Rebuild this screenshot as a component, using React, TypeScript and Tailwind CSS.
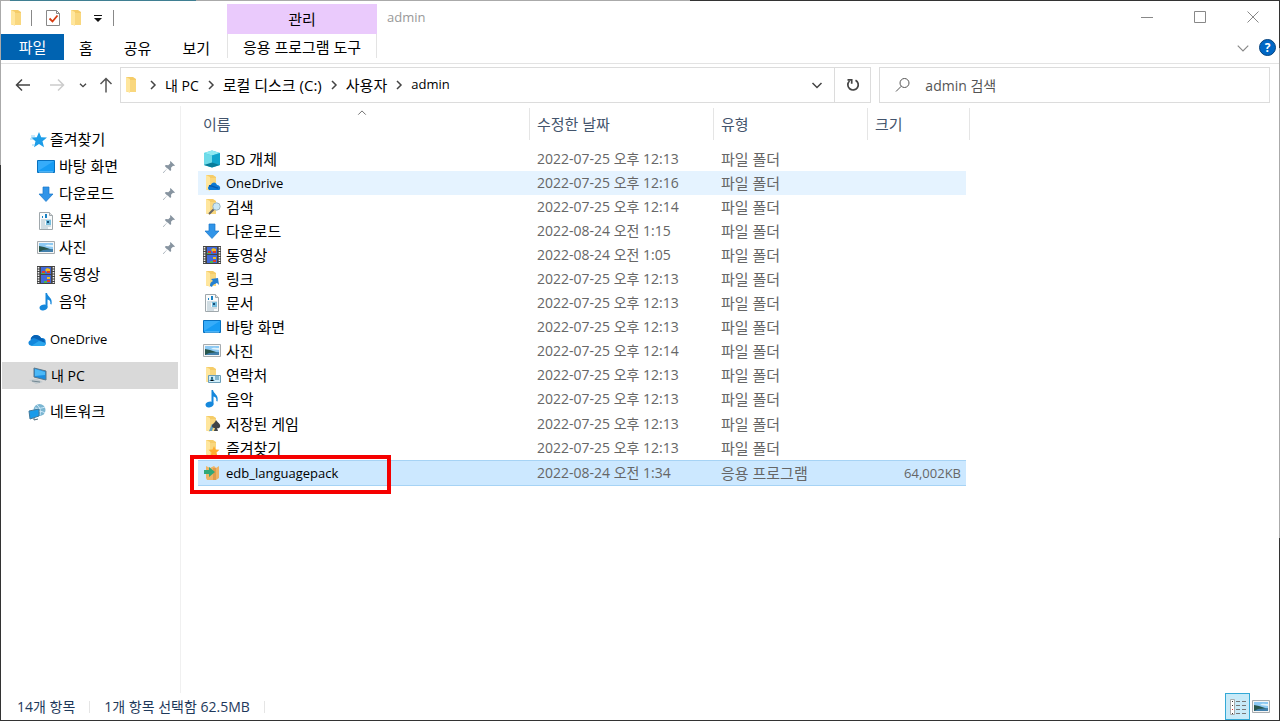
import React from "react";

const kinds = {
  cube: (
    <>
      <path d="M1 3 9 0.5 17 3v12l-8 2.5L1 15z" fill="#35c3dc" />
      <path d="M1 3 9 0.5 17 3 9 5.5z" fill="#8feaf2" />
      <path d="M1 3l8 2.500v8L1 15z" fill="#6fdbe9" />
      <path d="M9 5.5 17 3v12l-8-1.500z" fill="#11a5cc" />
      <path d="M1 15l8-2.500 8 2.500-8 2.5z" fill="#087c99" />
    </>
  ),
  folder: <Folder />,
  onedriveFolder: (
    <>
      <Folder />
      <path d="M6 16c-2-2-.5-4.500 1.500-4.500C9 7.500 13 7.500 14 11c3 .2 4 3 2.500 5z" fill="#0a78d4" />
      <path d="M6 11.800c3-1 5 2 9 2.200" stroke="#0758ad" strokeWidth="1.500" fill="none" />
    </>
  ),
  searchFolder: (
    <>
      <Folder />
      <path d="M6 16l5-5" stroke="#666" strokeWidth="2" />
      <circle cx="13.500" cy="8.500" r="3.700" fill="#c9e7f6" stroke="#98b4c1" />
    </>
  ),
  down: <path d="M6 2h6v7h4l-7 7.500L2 9h4z" fill="#3094e8" stroke="#1976c9" strokeWidth=".7" />,
  video: (
    <>
      <path d="M0 0h18v18H0z" fill="#444" />
      <path d="M4 1h10v7H4zM4 9h10v8H4z" fill="#4169d8" />
      <path d="M1.500 1v16M16.500 1v16" stroke="#eee" strokeWidth="1.600" strokeDasharray="1.500 1" />
      <path d="M8 4l2-2 3 1v3h-3zM10 11h3v2h-3z" fill="#f0bb20" />
      <path d="M5 5h3v2H5zM10 5h3v2h-3zM10 14h3v2h-3z" fill="#df3d28" />
      <path d="M4 7h4v1H4zM7 15h3v2H7z" fill="#4cb44c" />
    </>
  ),
  linkFolder: (
    <>
      <Folder />
      <path d="M7 16c0-3 1-4 3-5L8 9l7-1 1 7-2-2c-2 1-4 1-5 4z" fill="#237fd2" />
    </>
  ),
  doc: (
    <>
      <path d="M2.500.500h10l3 3v14h-13z" fill="#f9fbfc" stroke="#a0a8ac" />
      <path d="M12.500.500v3h3" fill="#ddd" stroke="#a0a8ac" />
      <path d="M5 6V4h1v2zm3 0V2h2v4z" fill="#1982c4" />
      <path d="M4 8h10M4 10h4M4 12h4M4 14h10M4 16h7" stroke="#a9bfca" />
      <path d="M9 8h5v5H9z" fill="#77bfdf" />
      <path d="M10 9h2v2h-2z" fill="#174e76" />
    </>
  ),
  desktop: (
    <>
      <path d="M.500 2.500h17v12H.500z" fill="#179cf4" stroke="#0870be" />
      <path d="M1 13V3h16z" fill="#36acfa" />
      <path d="M2 14h14" stroke="#7fcbfa" />
    </>
  ),
  photo: <Photo />,
  contacts: (
    <>
      <Folder />
      <path d="M5.500 9.500h12v7h-12z" fill="#d3effb" stroke="#6c9fb9" />
      <circle cx="9" cy="12" r="1.200" fill="#286f8d" />
      <path d="M7 15c0-2 4-2 4 0M12 11h4M12 13h4" stroke="#3680a6" />
    </>
  ),
  music: (
    <>
      <ellipse cx="6.500" cy="14.500" rx="4" ry="2.800" transform="rotate(-15 6.500 14.500)" fill="#1688dc" />
      <path d="M8.500 0H10c.5 4 6 4.500 4.500 11.500l-1.200-.500c.5-3-.8-4-2.800-4.500v8h-2z" fill="#1688dc" />
    </>
  ),
  games: (
    <>
      <Folder />
      <path d="M6 16l3-7 2 1-2 6z" fill="#5e9fc0" />
      <path d="M13 5c2 3 5 4 4 7-1 2-3 1-3 1l1 3h-4l1-3s-3 0-3-2 3-3 4-6" fill="#404346" />
    </>
  ),
  starFolder: (
    <>
      <Folder />
      <path d="M11 7l1.500 3.500 4 .2-3 2.800 1 4-3.500-2-3.500 2 1-4-3-2.800 4-.2z" fill="#ffac2e" />
    </>
  ),
  pack: (
    <>
      <path d="M3 2l4 2 4-2 2 2 3-2v12l-3 2H4l-1-2z" fill="#efb365" />
      <path d="M10 4h3v12h-3z" fill="#e09c4c" />
      <path d="M1 6h5V3l6 5-6 5v-3H1z" fill="#31a879" />
    </>
  ),
  star: (
    <>
      <path d="M9 1l2.200 5.200 5.800.3-4.500 3.700 1.500 6-5-3.300-5 3.300 1.500-6L1 6.500l5.800-.3z" fill="#1d9de8" />
      <path d="M1 5h4M0 8h3M2 14h3" stroke="#8fd2f6" />
    </>
  ),
  cloud: (
    <>
      <path d="M4 15c-4 0-5-5-1-6 0-5 7-7 10-2 4-.5 5 2 4.500 4 1 2-.5 4-2.500 4z" fill="#1287dc" />
      <path d="M2.500 9C6 5 9 9 17.500 12 16 10 17 8 13 7 10 2 3 4 2.500 9z" fill="#0762b5" />
      <path d="M3 15l8-5 6.500 2c.5 2-1 3-2.500 3z" fill="#2ba6ed" />
    </>
  ),
  pc: (
    <>
      <path d="M5 1l12 3v9L5 10z" fill="#1b8de0" stroke="#5a7789" />
      <path d="M6 2l10 3v3L6 9z" fill="#4cb9f7" />
      <path d="M0 13l8-1 6 3-7 2z" fill="#bfc8cd" />
      <path d="M3 14l8 1" stroke="#748993" />
    </>
  ),
  network: (
    <>
      <circle cx="11.500" cy="7" r="6" fill="#7bb6d2" />
      <path d="M9 2c3 2 4 6 3 10M7 5c4 1 7 0 10-1M17 10c-3-2-6-2-9-1" stroke="#d0eafa" fill="none" />
      <path d="M1 8l10-2v7L2 16z" fill="#199bea" stroke="#427a9c" />
      <path d="M6 15v2l4-1" stroke="#4d6b7b" fill="none" />
    </>
  ),
};

type Kind = keyof typeof kinds;

function Folder() {
  return (
    <>
      <path d="M3 1h7l3 2v13H4l-1-1z" fill="#f5cc68" />
      <path d="M3 1l4 2v14l-4-2z" fill="#ffe69d" />
      <path d="M7 4h6v12H7z" fill="#f9d77e" />
    </>
  );
}

function Photo() {
  return (
    <>
      <path d="M.500 2.500h17v12H.500z" fill="#f6f6f6" stroke="#a6abae" />
      <path d="M2 4h14v9H2z" fill="#8dc9f3" />
      <path d="M2 7l5 1 9 3v2H2z" fill="#28564c" />
      <path d="M6 11l10-1v3H2z" fill="#4280ac" />
      <path d="M8 7c2-2 5-1 8-1v2z" fill="#e0f3fc" />
    </>
  );
}

const Icon = ({ kind }: { kind: Kind }) => (
  <svg viewBox="0 0 18 18" className="size-[18px] shrink-0" aria-hidden="true">
    {kinds[kind]}
  </svg>
);

const Chevron = ({ className, d }: { className: string; d: string }) => (
  <svg viewBox="0 0 12 12" className={className} fill="none" stroke="currentColor" aria-hidden="true">
    <path d={d} />
  </svg>
);

const RIGHT = "M4 2l4 4-4 4";
const DOWN = "M1.500 4L6 8.500 10.500 4";
const UP = "M1.500 8L6 3.500 10.500 8";

type FileRow = { icon: Kind; name: string; date: string; type?: string; size?: string };

const files: FileRow[] = [
  { icon: "cube", name: "3D 개체", date: "2022-07-25 오후 12:13" },
  { icon: "onedriveFolder", name: "OneDrive", date: "2022-07-25 오후 12:16" },
  { icon: "searchFolder", name: "검색", date: "2022-07-25 오후 12:14" },
  { icon: "down", name: "다운로드", date: "2022-08-24 오전 1:15" },
  { icon: "video", name: "동영상", date: "2022-08-24 오전 1:05" },
  { icon: "linkFolder", name: "링크", date: "2022-07-25 오후 12:13" },
  { icon: "doc", name: "문서", date: "2022-07-25 오후 12:13" },
  { icon: "desktop", name: "바탕 화면", date: "2022-07-25 오후 12:13" },
  { icon: "photo", name: "사진", date: "2022-07-25 오후 12:14" },
  { icon: "contacts", name: "연락처", date: "2022-07-25 오후 12:13" },
  { icon: "music", name: "음악", date: "2022-07-25 오후 12:13" },
  { icon: "games", name: "저장된 게임", date: "2022-07-25 오후 12:13" },
  { icon: "starFolder", name: "즐겨찾기", date: "2022-07-25 오후 12:13" },
  { icon: "pack", name: "edb_languagepack", date: "2022-08-24 오전 1:34", type: "응용 프로그램", size: "64,002KB" },
];

const favorites: { icon: Kind; name: string; pinned?: boolean }[] = [
  { icon: "desktop", name: "바탕 화면", pinned: true },
  { icon: "down", name: "다운로드", pinned: true },
  { icon: "doc", name: "문서", pinned: true },
  { icon: "photo", name: "사진", pinned: true },
  { icon: "video", name: "동영상" },
  { icon: "music", name: "음악" },
];

const crumbs = [
  { name: "내 PC", text: "text-[14px]" },
  { name: "로컬 디스크 (C:)", text: "text-[15px]" },
  { name: "사용자", text: "text-[15px]" },
  { name: "admin", text: "text-[13px]" },
];

const isLatin = (s: string) => /^[\w\s]+$/.test(s);

const Pin = () => (
  <svg viewBox="0 0 12 12" className="size-3 ml-auto" aria-hidden="true">
    <path d="M7.500 0L12 4.500l-1 .5-1-.3-2 2 .2 2.300-1 1-2.700-2.700L.500 12 0 11.500l4.200-4L1.800 5l1-1 2.500.2 2-2L7 1z" fill="#8794a0" />
  </svg>
);

function TitleBar() {
  return (
    <header className="flex h-[63px] border-b border-[#e3e3e3]">
      <div className="flex w-[226px] flex-col">
        <div className="flex h-[33px] items-center pl-[7px]">
          <Icon kind="folder" />
          <span className="ml-[5px] h-4 w-px bg-[#888]" />
          <button aria-label="속성" className="ml-[13px]">
            <svg viewBox="0 0 16 18" className="h-[18px] w-4">
              <path d="M1.500 1.500h10l3 3v12h-13z" fill="#fff" stroke="#888" />
              <path d="M11.500 1.500v3h3" fill="none" stroke="#888" />
              <path d="M4.500 9.500l3 3 5-6" fill="none" stroke="#d83b10" strokeWidth="1.800" />
            </svg>
          </button>
          <button aria-label="새 폴더" className="ml-[7px]">
            <Icon kind="folder" />
          </button>
          <button aria-label="빠른 실행 도구 모음 사용자 지정" className="ml-2">
            <svg viewBox="0 0 8 8" className="size-2">
              <path d="M0 1.500h8" stroke="#111" />
              <path d="M0 4h8L4 8z" fill="#111" />
            </svg>
          </button>
          <span className="ml-[11px] h-4 w-px bg-[#888]" />
        </div>
        <nav className="flex h-[26px] items-center text-[15px]">
          <button className="h-[26px] w-[63px] bg-[#0063b1] text-white">파일</button>
          <button className="ml-[15px] pt-0.5">홈</button>
          <button className="ml-[31px] pt-0.5">공유</button>
          <button className="ml-[31px] pt-0.5">보기</button>
        </nav>
      </div>
      <div className="mt-[3px] flex w-[150px] flex-col text-[15px]">
        <div className="flex h-[30px] items-center justify-center bg-[#eacafc]">관리</div>
        <button className="h-[24px] border-x border-[#e3e3e3] pt-0.5 whitespace-nowrap">응용 프로그램 도구</button>
      </div>
      <h1 className="ml-[10px] mt-[7px] text-[13px] text-[#999]">admin</h1>
      <div className="ml-auto flex flex-col items-end text-[#888]">
        <div className="flex h-[32px] items-center gap-[41px] pr-[20px]">
          {["M0 6.500h12", "M.500.500h11v11H.500z", "M.500.500l11 11M11.500.500l-11 11"].map((d, i) => (
            <button key={d} aria-label={["최소화", "최대화", "닫기"][i]}>
              <Chevron className="size-3" d={d} />
            </button>
          ))}
        </div>
        <div className="flex h-[29px] items-center gap-[9px] pr-[3px]">
          <button aria-label="리본 확장"><Chevron className="size-[14px]" d={DOWN} /></button>
          <button aria-label="도움말" className="flex size-[17px] items-center justify-center rounded-full border border-[#07437d] bg-[#0067c5] text-[12px] font-bold text-white">?</button>
        </div>
      </div>
    </header>
  );
}

function AddressBar() {
  return (
    <div className="flex h-[42px] items-center pr-[9px] text-[14px]">
      <div className="flex w-[119px] items-center pl-[14px]">
        <button aria-label="뒤로">
          <svg viewBox="0 0 16 14" className="h-[14px] w-4" fill="none" stroke="#444" strokeWidth="1.500"><path d="M15 7H1.500M7 1.500L1.500 7 7 12.500" /></svg>
        </button>
        <button aria-label="앞으로" className="ml-[18px]">
          <svg viewBox="0 0 16 14" className="h-[14px] w-4" fill="none" stroke="#ccc" strokeWidth="1.500"><path d="M1 7h13.500M9 1.500L14.500 7 9 12.500" /></svg>
        </button>
        <button aria-label="최근 위치" className="ml-[14px] text-[#444]"><Chevron className="size-2 stroke-2" d={DOWN} /></button>
        <button aria-label="위로" className="ml-[12px]">
          <svg viewBox="0 0 14 16" className="h-4 w-[14px]" fill="none" stroke="#555" strokeWidth="1.500"><path d="M7 15.500v-14M1.500 7L7 1.500 12.500 7" /></svg>
        </button>
      </div>
      <div className="flex h-9 flex-[752] items-center border border-[#dcdcdc]">
        <span className="ml-[2px]"><Icon kind="folder" /></span>
        {crumbs.map((c) => (
          <React.Fragment key={c.name}>
            <Chevron className="mx-[6px] size-3 shrink-0 stroke-[1.5] text-[#444]" d={RIGHT} />
            <a href="#" className={`whitespace-nowrap ${c.text}`}>{c.name}</a>
          </React.Fragment>
        ))}
        <button aria-label="이전 위치" className="ml-auto mr-[11px] text-[#444]"><Chevron className="size-3 stroke-[1.5]" d={DOWN} /></button>
        <button aria-label="새로 고침" className="flex h-full w-9 items-center justify-center border-l border-[#dcdcdc]">
          <svg viewBox="0 0 14 14" className="size-[14px]" fill="none" stroke="#444" strokeWidth="1.700">
            <path d="M9.500 2.200A5.200 5.200 0 1 1 3.500 3M1.500 1.800h4.200v4" />
          </svg>
        </button>
      </div>
      <label className="ml-2 flex h-9 flex-[390] items-center border border-[#dcdcdc]">
        <svg viewBox="0 0 16 16" className="ml-[15px] size-4 shrink-0" fill="none" stroke="#555" aria-hidden="true">
          <circle cx="9.500" cy="6" r="4.500" />
          <path d="M6.300 9.200L1 14.500" />
        </svg>
        <input aria-label="admin 검색" placeholder="admin 검색" className="ml-[14px] min-w-0 flex-1 outline-none placeholder:text-[#555]" />
      </label>
    </div>
  );
}

function Sidebar() {
  return (
    <aside className="w-[180px] shrink-0 border-r border-[#f0f0f0] pt-[20px] text-[15px]">
      <a href="#" className="flex h-[27px] items-center gap-[2px] pl-[29px]"><Icon kind="star" />즐겨찾기</a>
      {favorites.map((f) => (
        <a href="#" key={f.name} className="flex h-[27px] items-center gap-1 pl-[36px] pr-[5px]">
          <Icon kind={f.icon} />
          {f.name}
          {f.pinned && <Pin />}
        </a>
      ))}
      <a href="#" className="mt-[11px] flex h-[27px] items-center gap-[4px] pl-[27px] text-[13px]"><Icon kind="cloud" />OneDrive</a>
      <a href="#" className="mt-[9px] mr-[2px] ml-px flex h-[27px] items-center gap-[4px] bg-[#d9d9d9] pl-[27px] text-[14px]"><Icon kind="pc" />내 PC</a>
      <a href="#" className="mt-[9px] flex h-[27px] items-center gap-[4px] pl-[27px]"><Icon kind="network" />네트워크</a>
    </aside>
  );
}

function FileTable() {
  return (
    <main className="min-w-0 flex-1 pl-[17px] pt-0.5 text-[14px]">
      <table className="h-[378px] w-[772px] table-fixed border-separate border-spacing-0 text-[#666]">
        <colgroup>
          <col className="w-[332px]" />
          <col className="w-[184px]" />
          <col className="w-[154px]" />
          <col className="w-[98px]" />
          <col className="w-1" />
        </colgroup>
        <thead className="text-left text-[15px] text-[#43546c]">
          <tr className="h-8">
            <th className="relative border-r border-[#e5e5e5] p-0 pl-[5px] font-normal">
              이름
              <Chevron className="absolute left-[159px] top-0 size-[10px] text-[#555]" d={UP} />
            </th>
            <th className="border-r border-[#e5e5e5] p-0 pl-[7px] font-normal">수정한 날짜</th>
            <th className="border-r border-[#e5e5e5] p-0 pl-[7px] font-normal">유형</th>
            <th colSpan={2} className="border-r border-[#e5e5e5] p-0 pl-[7px] font-normal">크기</th>
          </tr>
          <tr className="h-[7px]"><td colSpan={5} className="p-0" /></tr>
        </thead>
        <tbody>
          {files.map((f) => {
            const selected = f.icon === "pack";
            const bg = selected
              ? "bg-[#cce8ff] border-y border-[#a6d3f5]"
              : f.icon === "onedriveFolder"
                ? "bg-[#e5f3ff]"
                : "";
            return (
              <tr key={f.name}>
                <td className={`relative p-0 ${bg}`}>
                  <a href="#" className={`flex items-center gap-[5px] pl-[5px] leading-[22px] text-black ${isLatin(f.name) ? "text-[13px]" : "text-[15px]"}`}>
                    <Icon kind={f.icon} />
                    {f.name}
                  </a>
                  {selected && <span className="absolute -left-2 -top-1.5 h-[39px] w-[201px] border-4 border-[#f50000]" />}
                </td>
                <td className={`p-0 pl-[7px] leading-[22px] ${bg}`}>{f.date}</td>
                <td className={`p-0 pl-[7px] text-[15px] leading-[22px] ${bg}`}>{f.type ?? "파일 폴더"}</td>
                <td className={`p-0 pr-[5px] text-right text-[13px] leading-[22px] ${bg}`}>{f.size}</td>
                <td className="p-0" />
              </tr>
            );
          })}
        </tbody>
      </table>
    </main>
  );
}

function StatusBar() {
  return (
    <footer className="flex h-[27px] items-center pl-4 text-[14px] text-[#1e395b]">
      <span>14개 항목</span>
      <span className="mx-[14px] h-3 w-px bg-[#e5e5e5]" />
      <span>1개 항목 선택함 62.5MB</span>
      <span className="ml-[14px] h-3 w-px bg-[#e5e5e5]" />
      <button aria-label="자세히" className="ml-auto flex h-[27px] w-[25px] items-center justify-center border border-[#34a9d6] bg-[#c8eaf8]">
        <svg viewBox="0 0 18 18" className="size-[18px]">
          <path d="M1.500 1.500h4v15h-4z" fill="#fff" stroke="#aaa" />
          <path d="M7 3.500h4M7 7.500h4M7 11.500h4M7 15.500h4M13 3.500h4M13 7.500h4M13 11.500h4M13 15.500h4" stroke="#777" />
          <path d="M3 3.500h1M3 7.500h1M3 15.500h1" stroke="#333" />
          <path d="M3 11.500h1" stroke="#e22" />
        </svg>
      </button>
      <button aria-label="큰 아이콘" className="ml-[2px] mr-[9px]"><Icon kind="photo" /></button>
    </footer>
  );
}

// thin window edge, the desktop shows through parts of it
export default function App() {
  return (
    <div className="flex min-h-screen flex-col bg-white font-['Open_Sans','Noto_Sans_CJK_KR',sans-serif] text-black">
      <div className="h-px bg-[linear-gradient(to_right,#aaa_10px,#3f7f92_10px,#3f7f92_196px,#aaa_196px,#aaa_690px,#333_690px)]" />
      <div className="flex flex-1">
        <div className="w-px bg-[linear-gradient(#aaa_164px,#333_164px)]" />
        <div className="flex min-w-0 flex-1 flex-col">
          <TitleBar />
          <AddressBar />
          <div className="flex flex-1">
            <Sidebar />
            <FileTable />
          </div>
          <StatusBar />
        </div>
        <div className="w-px bg-[linear-gradient(#333_47px,#aaa_47px,#aaa_537px,#333_537px)]" />
      </div>
      <div className="h-px bg-[#333]" />
    </div>
  );
}
